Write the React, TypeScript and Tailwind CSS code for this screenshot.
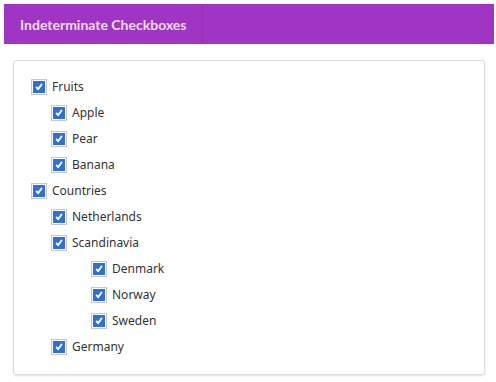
import React from "react";

type Node = { label: string; indent: number };

const rows: Node[] = [
  { label: "Fruits", indent: 0 },
  { label: "Apple", indent: 1 },
  { label: "Pear", indent: 1 },
  { label: "Banana", indent: 1 },
  { label: "Countries", indent: 0 },
  { label: "Netherlands", indent: 1 },
  { label: "Scandinavia", indent: 1 },
  { label: "Denmark", indent: 2 },
  { label: "Norway", indent: 2 },
  { label: "Sweden", indent: 2 },
  { label: "Germany", indent: 1 },
];

function Box() {
  return (
    <span className="flex h-[16px] w-[16px] items-center justify-center border border-[#c8c8c8] bg-white p-[1px]">
      <span className="flex h-full w-full items-center justify-center bg-[#2f6fd6]">
        <svg width="10" height="10" viewBox="0 0 10 10">
          <path d="M2.6 5.4 L4.1 7.2 L7.5 2.5" fill="none" stroke="white" strokeWidth="1.9" strokeLinecap="round" strokeLinejoin="round" />
        </svg>
      </span>
    </span>
  );
}

export default function App() {
  return (
    <div className="h-[382px] w-[496px] bg-white p-[4px]" style={{ fontFamily: '"Noto Sans", sans-serif' }}>
      <div className="flex h-[40px] w-[490px] bg-[#a034c3]">
        <div
          className="flex w-[199px] items-center border-r border-[#9530b6] pl-[16px] text-[14px] font-bold text-[#f2dcf7]"
          style={{ fontFamily: "Lato, sans-serif" }}
        >
          Indeterminate Checkboxes
        </div>
      </div>
      <div className="ml-[9px] mt-[16px] h-[315px] w-[472px] rounded-[3px] border border-[#dcdcdc] shadow-[0_1px_2px_rgba(0,0,0,0.12)] pt-[13px]">
        <div className="flex flex-col">
          {rows.map((r) => (
            <div
              key={r.label}
              className={
                "flex h-[26px] items-center gap-[5px] text-[12px] text-[#333] " +
                (r.indent === 0 ? "pl-[17px]" : r.indent === 1 ? "pl-[37px]" : "pl-[77px]")
              }
            >
              <Box />
              <span>{r.label}</span>
            </div>
          ))}
        </div>
      </div>
    </div>
  );
}
